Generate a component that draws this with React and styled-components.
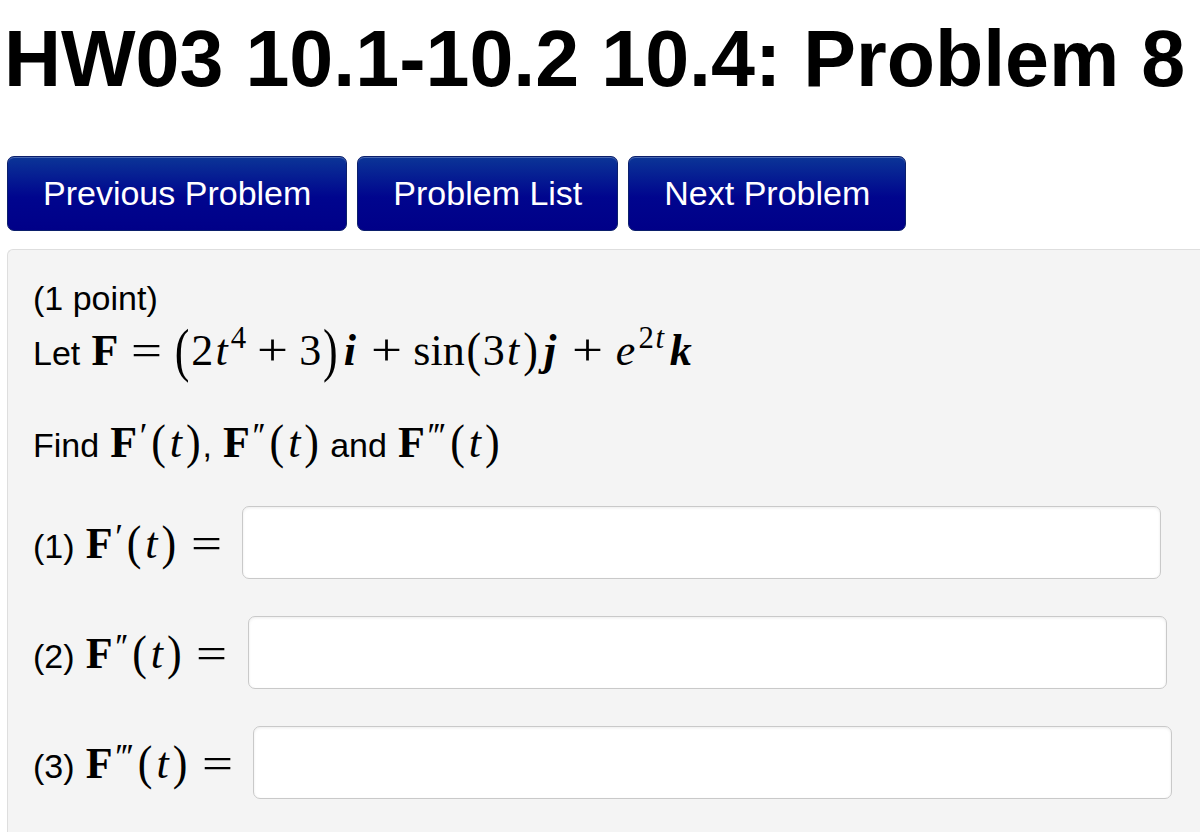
import styled, { createGlobalStyle } from 'styled-components';

const GlobalStyle = createGlobalStyle`
  html, body {
    margin: 0;
    padding: 0;
    background: #fff;
    overflow: hidden;
  }
  body {
    font-family: 'Liberation Sans', Arial, sans-serif;
    color: #000;
  }
`;

const Page = styled.div`
  padding: 0 0 0 7px;
  height: 832px;
`;

const Title = styled.h1`
  margin: 0 0 0 -3px;
  padding-top: 14px;
  font-size: 79px;
  line-height: 90px;
  font-weight: 700;
  white-space: nowrap;
`;

const NavBar = styled.nav`
  display: flex;
  gap: 10px;
  margin-top: 52px;
`;

const NavButton = styled.button`
  font-family: 'Liberation Sans', Arial, sans-serif;
  font-size: 34px;
  line-height: 39px;
  color: #fff;
  padding: 17px 35px 17px;
  border: 1px solid #0b1f6b;
  border-radius: 7px;
  background: linear-gradient(#0b3597, #00058e 55%, #000088);
  box-shadow: inset 0 1px 0 rgba(255, 255, 255, 0.25);
  cursor: pointer;
`;

const Panel = styled.section`
  margin-top: 18px;
  background: #f4f4f4;
  border: 1px solid #dedede;
  border-right: none;
  border-radius: 6px 0 0 0;
  padding: 28px 0 60px 25px;
  font-size: 34px;
`;

const Line = styled.div`
  line-height: ${p => p.$lh || 40}px;
  margin-top: ${p => p.$mt || 0}px;
  white-space: nowrap;
`;

const Math = styled.span`
  font-family: 'Liberation Serif', 'DejaVu Serif', serif;
  font-size: 44px;
`;

const Bold = styled.span`
  font-weight: 700;
  margin: 0 0.04em;
`;

const Ital = styled.span`
  font-style: italic;
  margin: 0 0.05em;
`;

const BoldItal = styled.span`
  font-weight: 700;
  font-style: italic;
  margin: 0 0.1em;
`;

const Rel = styled.span`
  display: inline-block;
  transform: scaleX(1.25);
  margin: ${p => (p.$trail ? '0 0.06em 0 0.36em' : '0 0.32em')};
`;

const Sup = styled.sup`
  font-size: 0.7em;
  line-height: 0;
  vertical-align: 0.55em;
  margin-left: 0.03em;
`;

const Paren = styled.span`
  display: inline-block;
  transform: scaleY(${p => p.$scale || 1.1});
  margin: 0 0.04em;
`;

const Prime = styled.span`
  font-size: 0.8em;
  vertical-align: 0.25em;
  margin: 0 0.12em 0 0.02em;
  letter-spacing: -0.06em;
`;

const AnswerRow = styled.div`
  display: flex;
  align-items: center;
  gap: 21px;
  margin-top: ${p => p.$mt}px;
`;

const Label = styled.span`
  white-space: nowrap;
  line-height: 40px;
`;

const AnswerInput = styled.input`
  width: 919px;
  height: 73px;
  box-sizing: border-box;
  background: #fff;
  border: 1px solid #c9c9c9;
  border-radius: 7px;
  box-shadow: inset 0 1px 3px rgba(0, 0, 0, 0.08);
  font-size: 30px;
  padding: 0 12px;
  outline: none;
`;

function Deriv({ n }) {
  return (
    <Math>
      <Bold>F</Bold>
      <Prime>{"′".repeat(n)}</Prime>
      <Paren>(</Paren><Ital>t</Ital><Paren>)</Paren>
    </Math>
  );
}

const rows = [
  { n: 1, mt: 36 },
  { n: 2, mt: 37 },
  { n: 3, mt: 37 },
];

export default function App() {
  return (
    <>
      <GlobalStyle />
      <Page>
        <Title>HW03 10.1-10.2 10.4: Problem 8</Title>

        <NavBar>
          <NavButton>Previous Problem</NavButton>
          <NavButton>Problem List</NavButton>
          <NavButton>Next Problem</NavButton>
        </NavBar>

        <Panel>
          <Line>(1 point)</Line>
          <Line $lh={50} $mt={8}>
            Let{' '}
            <Math>
              <Bold>F</Bold>
              <Rel>=</Rel>
              <Paren $scale={1.35}>(</Paren>2<Ital>t</Ital><Sup>4</Sup>
              <Rel>+</Rel>3<Paren $scale={1.35}>)</Paren>
              <BoldItal>i</BoldItal>
              <Rel>+</Rel>sin<Paren>(</Paren>3<Ital>t</Ital><Paren>)</Paren>
              <BoldItal>j</BoldItal>
              <Rel>+</Rel>
              <Ital>e</Ital><Sup>2<Ital>t</Ital></Sup>
              <BoldItal>k</BoldItal>
            </Math>
          </Line>
          <Line $lh={50} $mt={34}>
            Find <Deriv n={1} />, <Deriv n={2} /> and <Deriv n={3} />
          </Line>

          {rows.map(r => (
            <AnswerRow key={r.n} $mt={r.mt}>
              <Label>
                ({r.n}) <Deriv n={r.n} />
                <Math><Rel $trail>=</Rel></Math>
              </Label>
              <AnswerInput type="text" />
            </AnswerRow>
          ))}
        </Panel>
      </Page>
    </>
  );
}
